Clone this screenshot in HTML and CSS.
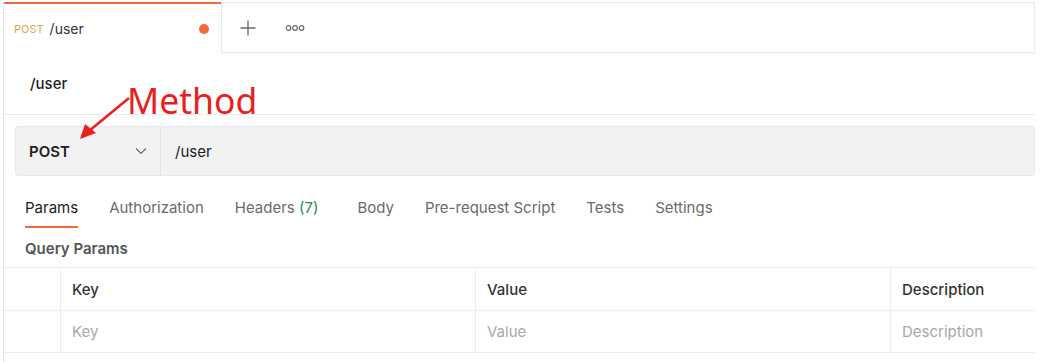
FILE: index.html
```html
<!DOCTYPE html>
<html lang="en">

<head>
    <meta charset="UTF-8">
    <title>POST /user</title>
    <link rel="stylesheet" href="styles.css">
</head>

<body>
    <div class="page">
        <div class="tab-bar">
            <div class="tab active">
                <span class="tab-method">POST</span>
                <span class="tab-name">/user</span>
                <span class="dot"></span>
            </div>
            <div class="tab-rest">
                <button class="icon-btn plus">
                    <svg width="16" height="16" viewBox="0 0 16 16"><path d="M8 0.5v15M0.5 8h15" stroke="#6b6b6b" stroke-width="1.4" fill="none"/></svg>
                </button>
                <button class="icon-btn more">
                    <svg width="20" height="8" viewBox="0 0 20 8"><circle cx="3.5" cy="4" r="2.3" stroke="#6b6b6b" stroke-width="1.2" fill="none"/><circle cx="10" cy="4" r="2.3" stroke="#6b6b6b" stroke-width="1.2" fill="none"/><circle cx="16.5" cy="4" r="2.3" stroke="#6b6b6b" stroke-width="1.2" fill="none"/></svg>
                </button>
            </div>
        </div>

        <div class="breadcrumb">/user</div>

        <div class="url-bar">
            <div class="method-select">
                <span>POST</span>
                <svg width="12" height="8" viewBox="0 0 12 8"><path d="M1 1.5l5 5 5-5" stroke="#6b6b6b" stroke-width="1.2" fill="none"/></svg>
            </div>
            <div class="url-input">/user</div>
        </div>

        <div class="req-tabs">
            <span class="req-tab active">Params</span>
            <span class="req-tab">Authorization</span>
            <span class="req-tab headers">Headers <span class="count">(7)</span></span>
            <span class="req-tab">Body</span>
            <span class="req-tab">Pre-request Script</span>
            <span class="req-tab">Tests</span>
            <span class="req-tab">Settings</span>
        </div>

        <div class="section-title">Query Params</div>

        <div class="params-table">
            <div class="row head">
                <div class="cell check"></div>
                <div class="cell key">Key</div>
                <div class="cell value">Value</div>
                <div class="cell desc">Description</div>
            </div>
            <div class="row placeholder">
                <div class="cell check"></div>
                <div class="cell key">Key</div>
                <div class="cell value">Value</div>
                <div class="cell desc">Description</div>
            </div>
        </div>

        <!-- annotation drawn on top of the screenshot -->
        <div class="note">Method</div>
        <svg class="note-arrow" width="60" height="50" viewBox="0 0 60 50">
            <path d="M52 3L12 36" stroke="#e8211f" stroke-width="2.6" fill="none"/>
            <path d="M3 44L8 29L19 38Z" fill="#e8211f"/>
        </svg>
    </div>
</body>

</html>
```

FILE: styles.css
```css
body {
    margin: 0;
    font-family: Inter, "Noto Sans", Arial, sans-serif;
    color: #212121;
    background-color: white;
}

.page {
    position: relative;
    margin-left: 3px;
    width: 1032px;
    height: 362px;
    border-left: 1px solid #e6e6e6;
    box-sizing: border-box;
}

/* top tabs */
.tab-bar {
    display: flex;
    height: 51px;
    margin-top: 2px;
}

.tab {
    width: 217px;
    display: flex;
    align-items: center;
    padding: 0 11px 0 10px;
    box-sizing: border-box;
}

.tab.active {
    border-top: 2px solid #f26b3a;
}

.tab-method {
    font-size: 11px;
    color: #d9a84a;
    margin-right: 6px;
}

.tab-name {
    font-size: 14px;
    color: #333;
    flex: 1;
}

.dot {
    width: 10px;
    height: 10px;
    border-radius: 50%;
    background-color: #f26b3a;
    margin-right: 1px;
}

.tab-rest {
    flex: 1;
    display: flex;
    align-items: center;
    border: 1px solid #e6e6e6;
    border-right-color: #ececec;
    box-shadow: 0 1px 2px rgba(0, 0, 0, 0.04);
    padding-left: 18px;
}

.icon-btn {
    border: none;
    background: none;
    padding: 0;
    display: flex;
    align-items: center;
    cursor: pointer;
}

.icon-btn.plus {
    margin-right: 29px;
}

/* breadcrumb */
.breadcrumb {
    height: 62px;
    line-height: 62px;
    padding-left: 26px;
    font-size: 15px;
    font-weight: 500;
    color: #212121;
    border-bottom: 1px solid #ececec;
    box-sizing: border-box;
}

/* url bar */
.url-bar {
    display: flex;
    height: 50px;
    margin: 11px 0 0 11px;
    background-color: #f2f2f2;
    border: 1px solid #e8e8e8;
    border-radius: 4px;
    box-sizing: border-box;
}

.method-select {
    width: 145px;
    display: flex;
    align-items: center;
    justify-content: space-between;
    padding: 0 13px 0 13px;
    box-sizing: border-box;
    border-right: 1px solid #e3e3e3;
    font-size: 15px;
    font-weight: 600;
    color: #212121;
}

.url-input {
    display: flex;
    align-items: center;
    padding-left: 14px;
    font-size: 15px;
    color: #212121;
}

/* request tabs */
.req-tabs {
    display: flex;
    gap: 31px;
    margin: 21px 0 0 21px;
}

.req-tab {
    font-size: 15px;
    line-height: 22px;
    color: #6b6b6b;
    padding-bottom: 7px;
    border-bottom: 2px solid transparent;
}

.req-tab.active {
    color: #212121;
    border-bottom-color: #f26b3a;
}

.req-tab.headers {
    margin-right: 8px;
}

.count {
    color: #2d8a4e;
}

.section-title {
    margin: 11px 0 0 21px;
    font-size: 15px;
    line-height: 20px;
    font-weight: 600;
    color: #555;
}

/* params table */
.params-table {
    margin-top: 8px;
    border-top: 1px solid #ededed;
}

.row {
    display: flex;
    border-bottom: 1px solid #ededed;
}

.row.head {
    height: 42px;
    font-size: 15px;
    font-weight: 500;
    color: #333;
}

.row.placeholder {
    height: 41px;
    font-size: 15px;
    color: #a8a8a8;
}

.cell {
    display: flex;
    align-items: center;
    padding-left: 11px;
    box-sizing: border-box;
    border-right: 1px solid #ededed;
}

.cell.check {
    width: 57px;
    padding: 0;
}

.cell.key,
.cell.value {
    width: 415px;
}

.cell.desc {
    flex: 1;
    border-right: none;
}

/* annotation */
.note {
    position: absolute;
    left: 123px;
    top: 74px;
    font-family: "Noto Sans", sans-serif;
    font-size: 35.5px;
    line-height: 48px;
    color: #e8211f;
}

.note-arrow {
    position: absolute;
    left: 73px;
    top: 93px;
}
```
